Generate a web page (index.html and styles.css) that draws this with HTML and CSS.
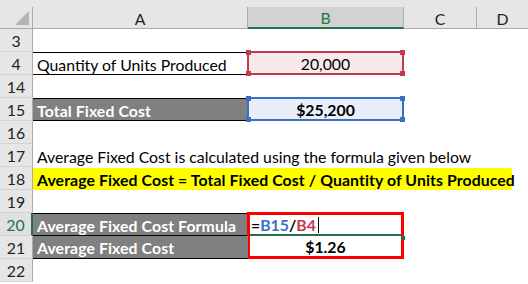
FILE: index.html
```html
<!DOCTYPE html>
<html>
<head>
<meta charset="utf-8">
<link rel="stylesheet" href="styles.css">
</head>
<body>
<div class="sheet">
  <div class="strip"></div>
  <div class="corner"><span class="tri"></span></div>
  <div class="ch">A</div>
  <div class="ch sel">B</div>
  <div class="ch">C</div>
  <div class="ch last">D</div>

  <div class="rh">3</div><div class="c"></div><div class="c"></div><div class="c"></div><div class="c"></div>

  <div class="rh">4</div>
  <div class="c a lined">Quantity of Units Produced</div>
  <div class="c b red-sel">20,000<i class="h tl"></i><i class="h tr"></i><i class="h bl"></i><i class="h br"></i></div>
  <div class="c"></div><div class="c"></div>

  <div class="rh">14</div><div class="c"></div><div class="c"></div><div class="c"></div><div class="c"></div>

  <div class="rh">15</div>
  <div class="c a gray lined">Total Fixed Cost</div>
  <div class="c b blue-sel bold">$25,200<i class="h tl"></i><i class="h tr"></i><i class="h bl"></i><i class="h br"></i></div>
  <div class="c"></div><div class="c"></div>

  <div class="rh">16</div><div class="c"></div><div class="c"></div><div class="c"></div><div class="c"></div>

  <div class="rh">17</div>
  <div class="c a span4">Average Fixed Cost is calculated using the formula given below</div>

  <div class="rh">18</div>
  <div class="c span4"><div class="yellow">Average Fixed Cost = Total Fixed Cost / Quantity of Units Produced</div></div>

  <div class="rh">19</div><div class="c"></div><div class="c"></div><div class="c"></div><div class="c"></div>

  <div class="rh active">20</div>
  <div class="c a gray lined">Average Fixed Cost Formula</div>
  <div class="box">
    <div class="formula"><span class="k">=</span><span class="blue">B15</span><span class="k">/</span><span class="redt">B4</span><span class="caret"></span></div>
    <div class="result">$1.26</div>
    <i class="gh"></i>
  </div>
  <div class="c"></div><div class="c"></div>

  <div class="rh">21</div>
  <div class="c a gray lined2">Average Fixed Cost</div>
  <div class="c"></div><div class="c"></div>

  <div class="rh">22</div><div class="c"></div><div class="c"></div><div class="c"></div><div class="c"></div>
</div>
</body>
</html>
```

FILE: styles.css
```css
* { box-sizing: border-box; }
html, body { margin: 0; padding: 0; background: #fff; }
body {
  width: 528px;
  height: 284px;
  overflow: hidden;
  font-family: Lato, "Open Sans", "Liberation Sans", sans-serif;
  font-size: 15.8px;
  color: #000;
}
.sheet {
  display: grid;
  grid-template-columns: 33px 215px 156px 73px 51px;
  grid-template-rows: 7px 22px repeat(11, 23px);
}
.strip {
  grid-column: 1 / -1;
  background: #e6e6e6;
}
.corner {
  position: relative;
  background: #e6e6e6;
  border-right: 1px solid #ababab;
  border-bottom: 1px solid #ababab;
}
.tri {
  position: absolute;
  right: 3px;
  bottom: 3px;
  width: 0;
  height: 0;
  border-left: 14px solid transparent;
  border-bottom: 14px solid #b4b4b4;
}
.ch {
  background: #e6e6e6;
  border-right: 1px solid #ababab;
  border-bottom: 1px solid #ababab;
  display: flex;
  align-items: center;
  justify-content: center;
  color: #222;
  font-size: 15.8px;
  padding-top: 1px;
}
.ch.last { border-right: none; }
.ch.sel {
  background: #d2d2d2;
  color: #217346;
  border-bottom: 2px solid #217346;
}
.rh {
  background: #e6e6e6;
  border-right: 1px solid #ababab;
  border-bottom: 1px solid #d4d4d4;
  display: flex;
  align-items: center;
  justify-content: center;
  color: #222;
  font-size: 15.8px;
  padding-top: 1px;
}
.rh.active {
  color: #217346;
  background: #e1e1e1;
  border-right: 2px solid #217346;
}
.c {
  position: relative;
  display: flex;
  align-items: center;
  white-space: nowrap;
  padding-top: 1px;
}
.a { padding-left: 4px; }
.span4 { grid-column: 2 / 6; }
.lined {
  border-top: 1px solid #000;
  border-bottom: 1px solid #000;
}
.lined2 { border-bottom: 1px solid #000; }
.gray {
  background: #808080;
  color: #fff;
  font-weight: bold;
  letter-spacing: 0.1px;
}
.bold { font-weight: bold; }
.b { justify-content: center; }
.red-sel {
  background: #f7e9e9;
  border: 2px solid #c43b4b;
  margin: -1px 0 0 -1px;
}
.blue-sel {
  background: #e9eff9;
  border: 2px solid #3a6fc4;
  margin: -1px 0 0 -1px;
}
.h {
  position: absolute;
  width: 5px;
  height: 5px;
}
.red-sel .h { background: #c43b4b; }
.blue-sel .h { background: #3a6fc4; }
.h.tl { left: -3px; top: -3px; }
.h.tr { right: -3px; top: -3px; }
.h.bl { left: -3px; bottom: -3px; }
.h.br { right: -3px; bottom: -3px; }
.yellow {
  background: #ffff00;
  width: 479px;
  align-self: stretch;
  display: flex;
  align-items: center;
  padding-left: 4px;
  font-weight: bold;
  letter-spacing: 0.1px;
}
.box {
  grid-column: 3;
  grid-row: span 2;
  position: relative;
  border: 3px solid #ff0000;
  margin: -1px 0 0 -1px;
  display: grid;
  grid-template-rows: 1fr 1fr;
  font-weight: bold;
}
.formula {
  display: flex;
  align-items: center;
  padding-left: 1px;
  border-bottom: 2px solid #217346;
}
.k { color: #000; }
.blue { color: #3a6fc4; }
.redt { color: #c43b4b; }
.caret {
  display: inline-block;
  width: 1px;
  height: 16px;
  background: #000;
  margin-left: 2px;
}
.result {
  display: flex;
  align-items: center;
  justify-content: center;
}
.gh {
  position: absolute;
  right: -4px;
  top: 21px;
  width: 4px;
  height: 4px;
  background: #217346;
}
```
